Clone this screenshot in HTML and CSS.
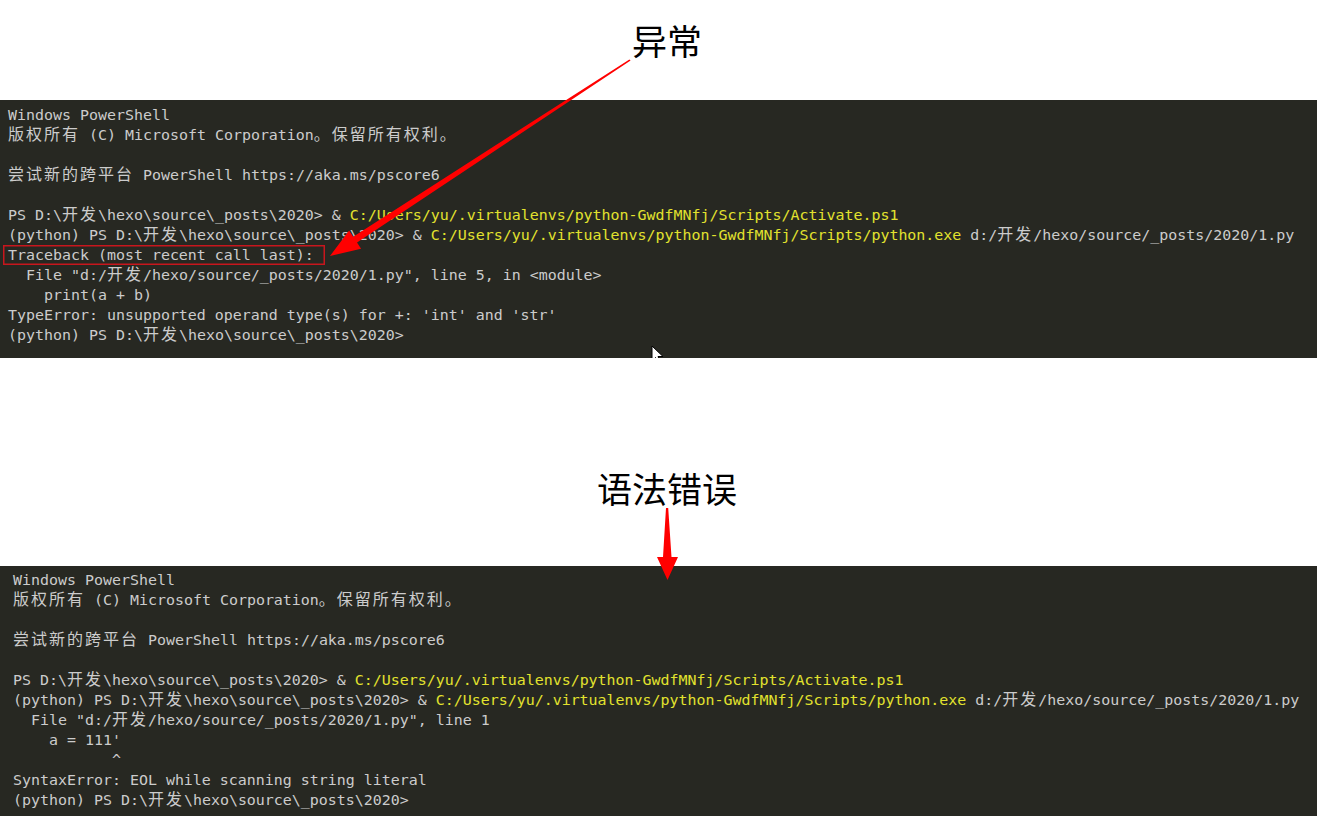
FILE: index.html
```html
<!DOCTYPE html>
<html lang="zh-CN">
<head>
    <meta charset="UTF-8">
    <title>异常与语法错误</title>
    <link rel="stylesheet" href="styles.css">
</head>
<body>
    <div class="page">
        <h2 class="caption caption-top">异常</h2>

        <div class="term term-top">
<pre>Windows PowerShell
<span class="cj">版权所有</span> (C) Microsoft Corporation<span class="cj">。保留所有权利。</span>

<span class="cj">尝试新的跨平台</span> PowerShell https://aka.ms/pscore6

PS D:\<span class="cj">开发</span>\hexo\source\_posts\2020&gt; &amp; <span class="y">C:/Users/yu/.virtualenvs/python-GwdfMNfj/Scripts/Activate.ps1</span>
(python) PS D:\<span class="cj">开发</span>\hexo\source\_posts\2020&gt; &amp; <span class="y">C:/Users/yu/.virtualenvs/python-GwdfMNfj/Scripts/python.exe</span> d:/<span class="cj">开发</span>/hexo/source/_posts/2020/1.py
<span class="mark">Traceback (most recent call last):</span>
  File "d:/<span class="cj">开发</span>/hexo/source/_posts/2020/1.py", line 5, in &lt;module&gt;
    print(a + b)
TypeError: unsupported operand type(s) for +: 'int' and 'str'
(python) PS D:\<span class="cj">开发</span>\hexo\source\_posts\2020&gt;</pre>
            <svg class="cursor" width="14" height="20" viewBox="0 0 14 20">
                <path d="M1 1 L1 16 L4.5 12.5 L7 18.5 L9.5 17.5 L7 11.5 L12 11.5 Z" fill="#fff" stroke="#000" stroke-width="1"/>
            </svg>
        </div>

        <h2 class="caption caption-mid">语法错误</h2>

        <div class="term term-bottom">
<pre>Windows PowerShell
<span class="cj">版权所有</span> (C) Microsoft Corporation<span class="cj">。保留所有权利。</span>

<span class="cj">尝试新的跨平台</span> PowerShell https://aka.ms/pscore6

PS D:\<span class="cj">开发</span>\hexo\source\_posts\2020&gt; &amp; <span class="y">C:/Users/yu/.virtualenvs/python-GwdfMNfj/Scripts/Activate.ps1</span>
(python) PS D:\<span class="cj">开发</span>\hexo\source\_posts\2020&gt; &amp; <span class="y">C:/Users/yu/.virtualenvs/python-GwdfMNfj/Scripts/python.exe</span> d:/<span class="cj">开发</span>/hexo/source/_posts/2020/1.py
  File "d:/<span class="cj">开发</span>/hexo/source/_posts/2020/1.py", line 1
    a = 111'
           ^
SyntaxError: EOL while scanning string literal
(python) PS D:\<span class="cj">开发</span>\hexo\source\_posts\2020&gt;</pre>
        </div>

        <!-- annotation arrows drawn over the screenshots -->
        <svg class="arrows" width="1317" height="816" viewBox="0 0 1317 816">
            <polygon fill="#ff0000" points="630.6,60.6 357,242.5 361.1,248.8 330,256 349.1,230.4 353.2,236.7 629.4,59.4"/>
            <polygon fill="#ff0000" points="666,508 668.2,508 671.5,557 678,557 667.5,580 657,557 663,557"/>
        </svg>
    </div>
</body>
</html>
```

FILE: styles.css
```css
body {
    margin: 0;
    background-color: #ffffff;
    overflow: hidden;
}
.page {
    position: relative;
    width: 1317px;
    height: 816px;
    overflow: hidden;
}
.caption {
    margin: 0;
    box-sizing: border-box;
    padding-left: 17px;
    text-align: center;
    font-family: "Noto Sans CJK SC", sans-serif;
    font-size: 35px;
    font-weight: 400;
    line-height: 40px;
    color: #000000;
}
.caption-top {
    height: 100px;
    padding-top: 20px;
}
.caption-mid {
    height: 208px;
    padding-top: 110px;
}
.term {
    position: relative;
    box-sizing: border-box;
    background-color: #272822;
    overflow: hidden;
}
.term pre {
    margin: 0;
    font-family: "DejaVu Sans Mono", "Noto Sans CJK SC", monospace;
    font-size: 14.95px;
    line-height: 20px;
    color: #cccccc;
    white-space: pre;
}
.term-top {
    height: 258px;
    padding: 5px 8px 0;
}
.term-bottom {
    height: 250px;
    padding: 4px 13px 0;
}
.cj {
    font-family: "Noto Sans CJK SC", sans-serif;
    font-size: 16px;
    line-height: 0;
    letter-spacing: 2px;
}
.y {
    color: #e2e22e;
}
.mark {
    display: inline-block;
    height: 20px;
    margin-left: -5px;
    padding: 0 11px 0 5px;
    box-shadow: inset 0 0 0 1.5px #c8161d;
    vertical-align: top;
}
.cursor {
    position: absolute;
    left: 651px;
    top: 245px;
}
.arrows {
    position: absolute;
    top: 0;
    left: 0;
    pointer-events: none;
}
```
